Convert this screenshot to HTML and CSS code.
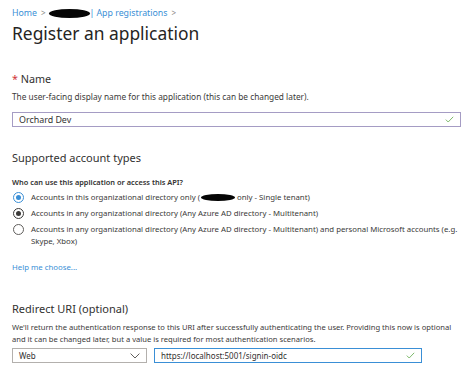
FILE: index.html
```html
<!DOCTYPE html>
<html>
<head>
<meta charset="utf-8">
<link rel="stylesheet" href="styles.css">
</head>
<body>
<div class="page">
  <nav class="crumbs">
    <a class="crumb">Home</a><span class="sep">&gt;</span><span class="blot blot-crumb"></span><span class="pipe">|</span><a class="crumb">App registrations</a><span class="sep">&gt;</span>
  </nav>
  <h1 class="title">Register an application</h1>

  <section class="sec sec-name">
    <h2 class="label"><span class="req">*</span> Name</h2>
    <p class="desc desc-name">The user-facing display name for this application (this can be changed later).</p>
    <div class="field field-name">
      <span class="value">Orchard Dev</span>
      <svg class="check" width="9" height="7" viewBox="0 0 9 7"><path d="M0.8 3.6 L3.2 6 L8.2 0.8" fill="none" stroke="#7fba6c" stroke-width="1"/></svg>
    </div>
  </section>

  <section class="sec sec-types">
    <h2 class="heading">Supported account types</h2>
    <p class="question">Who can use this application or access this API?</p>
    <div class="radios">
      <div class="radio"><span class="dot dot-on"></span><span class="rtext">Accounts in this organizational directory only (<span class="blot blot-inline"></span>only - Single tenant)</span></div>
      <div class="radio"><span class="dot dot-dark"></span><span class="rtext">Accounts in any organizational directory (Any Azure AD directory - Multitenant)</span></div>
      <div class="radio"><span class="dot"></span><span class="rtext">Accounts in any organizational directory (Any Azure AD directory - Multitenant) and personal Microsoft accounts (e.g. Skype, Xbox)</span></div>
    </div>
    <a class="link">Help me choose...</a>
  </section>

  <section class="sec sec-redirect">
    <h2 class="heading">Redirect URI (optional)</h2>
    <p class="desc desc-wide">We'll return the authentication response to this URI after successfully authenticating the user. Providing this now is optional and it can be changed later, but a value is required for most authentication scenarios.</p>
    <div class="uri-row">
      <div class="field select">
        <span class="value">Web</span>
        <svg class="chev" width="10" height="6" viewBox="0 0 10 6"><path d="M0.6 0.6 L5 5 L9.4 0.6" fill="none" stroke="#605e5c" stroke-width="1"/></svg>
      </div>
      <div class="field field-uri">
        <span class="value">https://localhost:5001/signin-oidc</span>
        <svg class="check" width="9" height="7" viewBox="0 0 9 7"><path d="M0.8 3.6 L3.2 6 L8.2 0.8" fill="none" stroke="#7fba6c" stroke-width="1"/></svg>
      </div>
    </div>
  </section>
</div>
</body>
</html>
```

FILE: styles.css
```css
* { box-sizing: border-box; }
html, body { margin: 0; padding: 0; background: #fff; }
body {
  font-family: "Noto Sans", "Open Sans", sans-serif;
  color: #323130;
}
.page {
  padding: 7px 12px 0 12px;
  width: 474px;
}
.crumbs {
  display: flex;
  align-items: center;
  height: 12px;
  font-size: 8.8px;
  line-height: 12px;
}
.crumb { color: #3a8fd6; }
.sep { color: #8a8886; margin: 0 3px 0 4px; font-size: 8px; }
.pipe { color: #3a8fd6; margin: 0 2px 0 0; }
.blot {
  display: inline-block;
  background: #050505;
  border-radius: 50%;
}
.blot-crumb { width: 41px; height: 9px; margin-left: 0; }
.blot-inline { width: 34px; height: 7px; vertical-align: -0.5px; margin: 0 2px 0 1px; }
.title {
  margin: 3px 0 0 0;
  font-size: 17.4px;
  font-weight: 400;
  line-height: 22px;
  color: #252423;
}
.sec-name { margin-top: 28px; }
.label {
  margin: 0;
  font-size: 10.8px;
  font-weight: 400;
  line-height: 14px;
}
.req { color: #d13438; }
.desc {
  margin: 5px 0 0 0;
  font-size: 7.6px;
  line-height: 12px;
  color: #3b3a39;
}
.desc-name { font-size: 8.3px; }
.field {
  display: flex;
  align-items: center;
  border: 1px solid #a59cc4;
  height: 15px;
  padding: 0 6px 0 6px;
  font-size: 8px;
}
.field-name { margin-top: 9px; width: 449px; font-size: 8.9px; }
.value { flex: 1; }
.check { flex: none; }
.sec-types { margin-top: 24px; }
.heading {
  margin: 0;
  font-size: 11px;
  font-weight: 400;
  line-height: 14px;
}
.question {
  margin: 11px 0 0 0;
  font-size: 7.4px;
  font-weight: 600;
  line-height: 12px;
}
.radios {
  margin-top: 3px;
  display: flex;
  flex-direction: column;
  gap: 4px;
}
.radio {
  display: flex;
  align-items: flex-start;
  font-size: 7.8px;
  line-height: 12px;
  color: #3b3a39;
}
.dot {
  flex: none;
  width: 11px;
  height: 11px;
  border-radius: 50%;
  border: 1px solid #605e5c;
  margin: 0.5px 7px 0 1px;
  position: relative;
  background: #fff;
}
.dot-on { border-color: #3a8fd6; }
.dot-on::after, .dot-dark::after {
  content: "";
  position: absolute;
  left: 2px; top: 2px;
  width: 5px; height: 5px;
  border-radius: 50%;
  background: #3a8fd6;
}
.dot-dark { border-color: #3b3a39; }
.dot-dark::after { background: #3b3a39; }
.rtext { width: 432px; }
.link {
  display: block;
  margin-top: 14px;
  font-size: 7.8px;
  line-height: 12px;
  color: #3a8fd6;
}
.sec-redirect { margin-top: 29px; }
.desc-wide { margin-top: 5px; width: 450px; line-height: 12px; }
.uri-row {
  display: flex;
  gap: 7px;
  margin-top: 3px;
}
.select {
  width: 135px;
  border-color: #b3b0ad;
  padding-right: 6px;
}
.field-uri {
  width: 268px;
  border-color: #3a8fd6;
}
```
